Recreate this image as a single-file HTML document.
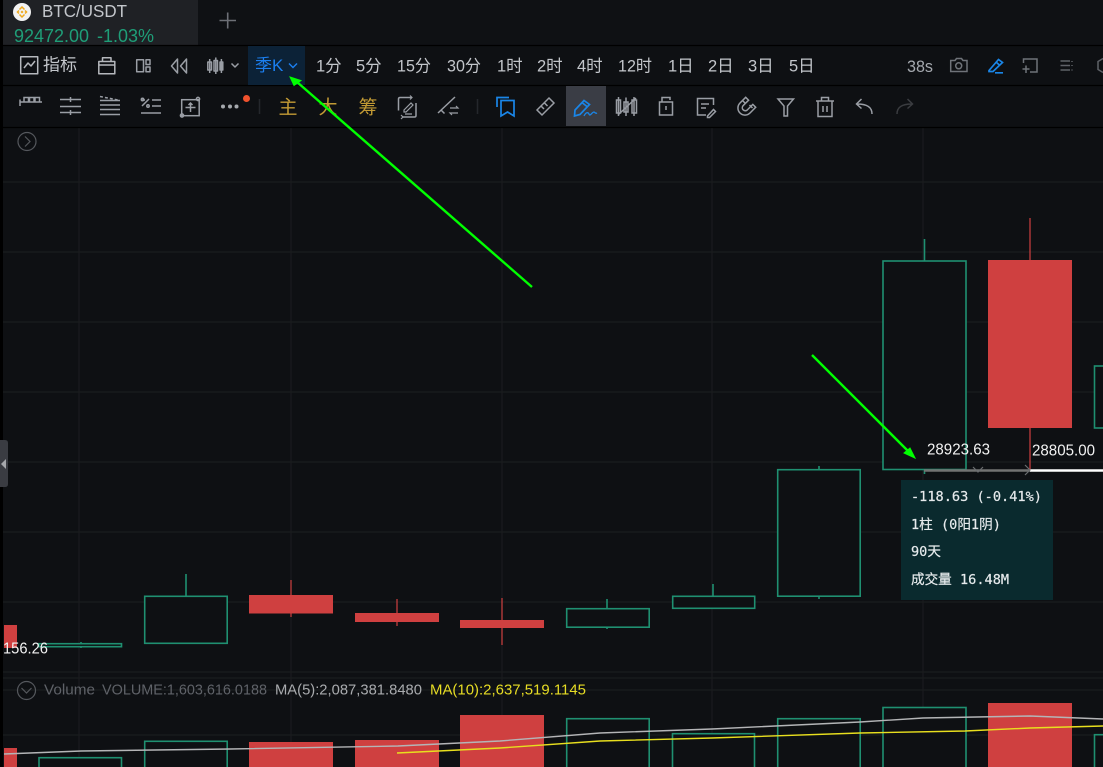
<!DOCTYPE html>
<html>
<head>
<meta charset="utf-8">
<style>
html,body{margin:0;padding:0;background:#0e1013;width:1103px;height:767px;overflow:hidden}
svg{display:block}
text{font-family:"Liberation Sans","Noto Sans CJK SC",sans-serif}
.tf{fill:#c3c6cb;font-size:16.5px}
.tt{font-family:"DejaVu Sans Mono","Noto Sans CJK SC",monospace;fill:#e6eaec;font-size:13.6px;stroke:#e6eaec;stroke-width:.2}
.ic{fill:none;stroke:#9a9ea5;stroke-width:1.5}
.ib{fill:none;stroke:#1a86e8;stroke-width:1.7}
.g{fill:#0e1013;stroke:#1f9071;stroke-width:1.6}
.gw{stroke:#1f9071;stroke-width:1.6}
.r{fill:#cf4040}
.rw{stroke:#cf4040;stroke-width:1.2}
.grid{stroke:#1a1c1f;stroke-width:1.2}
</style>
</head>
<body>
<svg width="1103" height="767" viewBox="0 0 1103 767" xmlns="http://www.w3.org/2000/svg">
<rect width="1103" height="767" fill="#0e1013"/>
<rect x="0" y="0" width="3" height="767" fill="#000"/>

<!-- grid -->
<g class="grid">
<path d="M79 128V767M291 128V767M502 128V767M712 128V767M923 128V767"/>
<path d="M3 182H1103M3 252H1103M3 322H1103M3 392H1103M3 462H1103M3 532H1103M3 602H1103M3 672H1103M3 678H1103M3 690H1103M3 735H1103"/>
</g>

<!-- header -->
<rect x="3" y="0" width="1100" height="45" fill="#0f1114"/>
<rect x="3" y="0" width="195" height="46" fill="#1f2125"/>
<circle cx="22" cy="12" r="9" fill="#f3f3f3"/>
<g fill="none" stroke="#f0a91c" stroke-width="1.500">
<path d="M19.500 9.500L22 7L24.500 9.500M19.500 14.500L22 17L24.500 14.500M19 10.500L17.500 12L19 13.500M25 10.500L26.500 12L25 13.500"/>
</g>
<path d="M22 10.500L23.500 12L22 13.500L20.500 12Z" fill="#f0a91c"/>
<text x="42" y="17" font-size="17.500" fill="#c3c6cb" textLength="85" lengthAdjust="spacingAndGlyphs">BTC/USDT</text>
<text x="14" y="42" font-size="18.500" fill="#1f9e78" textLength="75" lengthAdjust="spacingAndGlyphs">92472.00</text>
<text x="97" y="42" font-size="18.500" fill="#1f9e78" textLength="57" lengthAdjust="spacingAndGlyphs">-1.03%</text>
<path d="M219.500 20.500H236M227.700 12.500V28.500" stroke="#6d7076" stroke-width="1.600" fill="none"/>

<!-- toolbar 1 -->
<rect x="3" y="46" width="1100" height="39" fill="#0e1013"/>
<path d="M3 45.500H1103M3 85.500H1103M3 127.500H1103" stroke="#000" stroke-width="1.200"/>
<g class="ic" stroke-linejoin="round">
<rect x="20.700" y="56.700" width="17" height="17" stroke="#b5b8bd"/>
<path d="M24 68l4-5 3 3 4-5" stroke="#b5b8bd"/>
<path d="M98.800 61.500H114.800V73.700H98.800ZM98.800 65H114.800M102.500 61.500V57.700H111V61.500" stroke="#b5b8bd"/>
<path d="M136.700 59.700H143.500V71.800H136.700ZM146 59.700H150V64.500H146ZM146 67H150V71.800H146Z"/>
<path d="M177.500 59L171.500 66L177.500 73ZM186.500 59L180.500 66L186.500 73Z"/>
<path d="M207.800 62H211.500V70H207.800ZM214 60.500H217.500V71H214ZM220 62H222.800V70H220ZM209.700 59V73M215.800 57.500V74M221.400 59V73"/>
<path d="M231.500 63.500L235 67L238.500 63.500"/>
</g>
<rect x="248" y="46" width="57" height="39" fill="#0c2237"/>
<text x="255" y="71" font-size="17" fill="#1b7ff0">季K</text>
<path d="M289 63.500L293 67.500L297 63.500" fill="none" stroke="#1b7ff0" stroke-width="1.400"/>
<text x="43" y="70.500" font-size="17" fill="#c3c6cb">指标</text>
<g class="tf">
<text x="316" y="71.500">1分</text>
<text x="356" y="71.500">5分</text>
<text x="397" y="71.500" textLength="34" lengthAdjust="spacingAndGlyphs">15分</text>
<text x="447" y="71.500" textLength="34" lengthAdjust="spacingAndGlyphs">30分</text>
<text x="497" y="71.500">1时</text>
<text x="537" y="71.500">2时</text>
<text x="577" y="71.500">4时</text>
<text x="618" y="71.500" textLength="34" lengthAdjust="spacingAndGlyphs">12时</text>
<text x="668" y="71.500">1日</text>
<text x="708" y="71.500">2日</text>
<text x="748" y="71.500">3日</text>
<text x="789" y="71.500">5日</text>
<text x="907" y="72" textLength="26" lengthAdjust="spacingAndGlyphs" fill="#a5a9af" font-size="17">38s</text>
</g>
<g class="ic" stroke="#7b7f85">
<path d="M950.700 60.500H955L956.500 58.500H961.500L963 60.500H967V71.500H950.700Z" stroke="#6f7379"/>
<circle cx="958.700" cy="65.800" r="3" stroke="#6f7379"/>
<path d="M1023.500 63V59H1037V72H1030M1022.500 69H1029.500M1026 65.500V73" stroke="#6f7379"/>
<path d="M1060.500 61H1070M1060.500 65.500H1070M1060.500 70H1070M1072 61V62M1072 65V66M1072 69.500V70.500" stroke="#5f6268"/>
<path d="M1103 58.500L1098 61.500V69.500L1103 72.500" stroke="#5f6268"/>
</g>
<path class="ib" d="M989 70.500L998.500 59.500L1002.500 62.500L993 71.500H989ZM996 62L1000 65.500M995 72.800H1003"/>

<!-- toolbar 2 -->
<g class="ic">
<path d="M20 102H42M20 99.500V106M24 97.500H28.500V102H24ZM29.500 97.500H34V102H29.500ZM35 97.500H39.500V102H35Z"/>
<path d="M60 99.500H81M60 106.500H81M60 112.500H81M70.500 97V102M70.500 110V115"/>
<path d="M100 100.500H120M100 105H120M100 109.500H120M100 114.500H120"/>
<path d="M100 96.500L118 100" stroke-dasharray="3 2"/>
<path d="M152 100H161M152 106H161M141 113H161M142 106L149 99M141 100H145"/>
<circle cx="142.500" cy="99.500" r="1.200"/><circle cx="148" cy="106" r="1.200"/>
<rect x="181.700" y="99.700" width="17.500" height="16"/>
<circle cx="198" cy="99" r="1.600"/><circle cx="182" cy="115.500" r="1.600"/>
<path d="M185.500 107.500H195.500M190.500 103V112M188.500 105L190.500 103L192.500 105"/>
</g>
<circle cx="223" cy="106.500" r="2" fill="#a5a8ad"/><circle cx="230" cy="106.500" r="2" fill="#a5a8ad"/><circle cx="236.500" cy="106.500" r="2" fill="#a5a8ad"/>
<circle cx="246.500" cy="98.500" r="3.500" fill="#f0522d"/>
<path d="M259.500 99V114M477.500 99V114" stroke="#24272c" stroke-width="1.500"/>
<text x="278.500" y="113.500" font-size="19" fill="#c29a34">主</text>
<text x="318.500" y="113.500" font-size="19" fill="#c29a34">大</text>
<text x="358.500" y="113.500" font-size="19" fill="#c29a34">筹</text>

<g class="ic">
<path d="M412 97.500H400Q398.500 97.500 398.500 99V110.500M403 117H414.500Q416 117 416 115.500V103"/>
<path d="M404 110L411 103L413 105L406 112H404ZM405 114H412M401 115L403 117L401 119M410 95.500L412 97.500L410 99.500" stroke-width="1.200"/>
<path d="M438 113L455 97M441 110L444.500 113.500"/>
<path d="M450 108H458L456 106M458 113H450L452 115" stroke-width="1.200"/>
</g>
<g class="ib">
<path d="M497 107V97.500H509"/><path d="M501 100.500H514V116L507.500 112L501 116Z"/>
</g>
<g class="ic">
<path d="M537 110L549 98L554 103L542 115ZM541 106L544 109M544.500 103L547.500 106"/>
</g>
<rect x="566" y="86" width="40" height="40" fill="#3a3d45"/>
<g class="ib">
<path d="M574.500 116L575 110L584 100.500L589.500 104.500L580 114.500ZM582 102.500L587.500 107"/>
<path d="M584 116C586 112 588 112 589 114C590 117 592 112 594 112C595 112 595 114 597 113" stroke-width="1.300"/>
</g>
<g class="ic">
<path d="M616.500 100H620.500V113H616.500ZM624 102H628V112H624ZM632 100H636.500V113H632ZM618.500 97V116M626 97.500V116M634 97V116M618 115L636 98"/>
<path d="M659.500 102H672.500V115H659.500ZM662 102V97.500H670V100M666 106V110"/>
<path d="M713.500 105V98.500H697.500V115H706M701 104H709M701 108H706M707.500 116L713.500 109.500L715.500 111.500L709.500 117.500H707.500Z"/>
<path d="M745.700 97.300L740 103A7 7 0 0 0 750 113L755.700 107.300L752.800 104.400L747.100 110.100A3 3 0 0 1 742.900 105.900L748.600 100.200ZM742.500 100.500L745.500 103.500M749.500 105L752.500 108" />
<path d="M778 99H793.500L787.500 106V116H784V106Z"/>
<path d="M816 101H834M821.500 101V97.500H828.500V101M818 101.500V116.500H832V101.500M823 106V112M827 106V112"/>
<path d="M872 114C872 107 867 104 857 104M861.500 99L856.500 104L861.500 108.500"/>
<path d="M897 114C897 107 902 104 912 104M907.500 99L912.500 104L907.500 108.500" stroke="#3a3c40"/>
</g>

<!-- circles -->
<g fill="none" stroke="#55585d" stroke-width="1.200">
<circle cx="27" cy="141.500" r="9"/>
<path d="M25 136.500L30 141.500L25 146.500"/>
<circle cx="26.500" cy="690.500" r="9"/>
<path d="M21.500 688L26.500 693L31.500 688"/>
</g>

<!-- candles -->
<g>
<rect class="r" x="4" y="625" width="13" height="23"/>
<path class="gw" d="M81 642V648"/><rect class="g" x="39" y="643.700" width="82.500" height="3"/>
<path class="gw" d="M186 574V596"/><rect class="g" x="144.700" y="596.300" width="82.500" height="47"/>
<path class="rw" d="M291 580V617"/><rect class="r" x="249" y="595" width="84" height="18.500"/>
<path class="rw" d="M397 599V626"/><rect class="r" x="355" y="613" width="84" height="9"/>
<path class="rw" d="M502 598V645"/><rect class="r" x="460" y="620" width="84" height="8"/>
<path class="gw" d="M607 599V629"/><rect class="g" x="566.700" y="608.700" width="82.500" height="18.500"/>
<path class="gw" d="M713 584V597"/><rect class="g" x="672.700" y="596.300" width="82" height="12"/>
<path class="gw" d="M819 466V599"/><rect class="g" x="777.700" y="469.700" width="82.500" height="126.500"/>
<path class="gw" d="M924.500 239V262M924.500 469V474"/><rect class="g" x="883" y="261" width="83" height="208.500"/>
<path class="rw" d="M1030 218V470"/><rect class="r" x="988" y="260" width="84" height="168"/>
<rect class="g" x="1094.500" y="366" width="20" height="62"/>
</g>

<!-- measure -->
<path d="M924 470.500H1030" stroke="#727272" stroke-width="2.600"/>
<path d="M1030 470.500H1103" stroke="#fff" stroke-width="2.600"/>
<path d="M973 467L978 472L983 467M1025 465L1030 470L1025 475" fill="none" stroke="#6b6d70" stroke-width="1.200"/>
<text x="927" y="454.500" font-size="15.500" fill="#f2f2f2" textLength="63" lengthAdjust="spacingAndGlyphs">28923.63</text>
<text x="1032" y="455.500" font-size="15.500" fill="#f2f2f2" textLength="63" lengthAdjust="spacingAndGlyphs">28805.00</text>
<rect x="901" y="480" width="152" height="120" fill="#0a2a2e"/>
<text class="tt" x="911" y="501">-118.63 (-0.41%)</text>
<text class="tt" x="911" y="529">1柱 (0阳1阴)</text>
<text class="tt" x="911" y="556">90天</text>
<text class="tt" x="911" y="584">成交量 16.48M</text>
<text x="3" y="653.500" font-size="15.500" fill="#f2f2f2" textLength="45" lengthAdjust="spacingAndGlyphs">156.26</text>

<!-- volume labels -->
<text x="44" y="694.500" font-size="15" fill="#5f6268" textLength="51" lengthAdjust="spacingAndGlyphs">Volume</text>
<text x="102" y="694.500" font-size="15" fill="#5f6268" textLength="165" lengthAdjust="spacingAndGlyphs">VOLUME:1,603,616.0188</text>
<text x="275" y="694.500" font-size="15" fill="#a9abae" textLength="147" lengthAdjust="spacingAndGlyphs">MA(5):2,087,381.8480</text>
<text x="430" y="694.500" font-size="15" fill="#e6dc24" textLength="156" lengthAdjust="spacingAndGlyphs">MA(10):2,637,519.1145</text>

<!-- volume bars -->
<g>
<rect class="r" x="4" y="748" width="13" height="20"/>
<rect class="g" x="39" y="757.700" width="82.500" height="15"/>
<rect class="g" x="144.700" y="741.300" width="82.500" height="32"/>
<rect class="r" x="249" y="742" width="84" height="26"/>
<rect class="r" x="355" y="740" width="84" height="28"/>
<rect class="r" x="460" y="715" width="84" height="53"/>
<rect class="g" x="566.700" y="718.700" width="82.500" height="55"/>
<rect class="g" x="672.500" y="733.700" width="82" height="40"/>
<rect class="g" x="777.700" y="718.700" width="82.500" height="55"/>
<rect class="g" x="883" y="707.500" width="83" height="66"/>
<rect class="r" x="988" y="703" width="84" height="65"/>
<rect class="g" x="1094.500" y="734.700" width="20" height="40"/>
</g>
<polyline fill="none" stroke="#b4b5b7" stroke-width="1.400" points="4,754 81,751 230,749 398,746 500,741 600,733 712,729 860,722 923,718 1030,716 1103,719"/>
<polyline fill="none" stroke="#e8df1e" stroke-width="1.400" points="397,753 500,748 600,741 712,738 860,733 965,731 1030,728 1103,726"/>

<!-- collapse handle -->
<path d="M0 440H5Q8 440 8 443V484Q8 487 5 487H0Z" fill="#3a3c42"/>
<path d="M6 459V469L1 464Z" fill="#a5a7ab"/>

<!-- green arrows -->
<g stroke="#00ff00" stroke-width="2.400" fill="#00ff00">
<path d="M532 287L297 82" fill="none"/>
<path d="M290 77L301 80.500L294 85.500Z" stroke-width="1"/>
<path d="M812 355L909 452" fill="none"/>
<path d="M915 458L904 453L910 448Z" stroke-width="1"/>
</g>
</svg>
</body>
</html>
